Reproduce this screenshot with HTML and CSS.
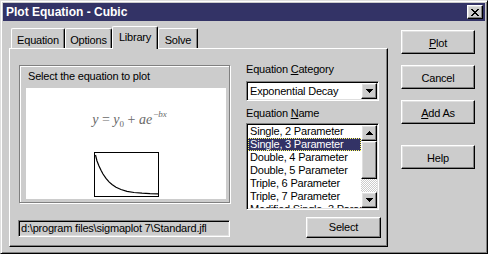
FILE: index.html
```html
<!DOCTYPE html>
<html>
<head>
<meta charset="utf-8">
<link rel="stylesheet" href="styles.css">
</head>
<body>
<div class="window">
  <div class="titlebar">
    <span class="title">Plot Equation - Cubic</span>
    <div class="close raised">
      <svg width="8" height="7" viewBox="0 0 8 7"><path d="M0 0h2v1H0zM6 0h2v1H6zM1 1h2v1H1zM5 1h2v1H5zM2 2h4v1H2zM3 3h2v1H3zM2 4h4v1H2zM1 5h2v1H1zM5 5h2v1H5zM0 6h2v1H0zM6 6h2v1H6z" fill="#000"/></svg>
    </div>
  </div>
  <div class="main">
    <div class="tabs-area">
      <div class="tabstrip">
        <div class="tab t-eq">Equation</div>
        <div class="tab t-opt">Options</div>
        <div class="tab t-lib active">Library</div>
        <div class="tab t-solve">Solve</div>
      </div>
      <div class="panel">
        <div class="left-col">
          <div class="frame">
            <div class="frame-label">Select the equation to plot</div>
            <div class="preview">
              <div class="formula"><i>y</i> = <i>y</i><span class="sub">0</span> + <i>ae</i><span class="sup">−<i>bx</i></span></div>
              <svg class="graph" width="65" height="45" viewBox="0 0 65 45">
                <rect x="0.5" y="0.5" width="64" height="44" fill="#fff" stroke="#000"/>
                <path d="M1.5 3 L3 9 L5 14 L7 18.3 L9 22 L12 26.4 L15 29.9 L18 32.5 L22 35.2 L27 37.5 L33 39.3 L40 40.5 L48 41.2 L56 41.6 L64 41.8" fill="none" stroke="#000" stroke-width="1.2"/>
              </svg>
            </div>
          </div>
          <div class="path-edit sunken">d:\program files\sigmaplot 7\Standard.jfl</div>
        </div>
        <div class="right-col">
          <div class="label cat">Equation <u>C</u>ategory</div>
          <div class="combo sunken">
            <span class="combo-text">Exponential Decay</span>
            <div class="drop-btn raised">
              <svg width="7" height="4" viewBox="0 0 7 4"><path d="M0 0h7v1H0zM1 1h5v1H1zM2 2h3v1H2zM3 3h1v1H3z" fill="#000"/></svg>
            </div>
          </div>
          <div class="label name">Equation <u>N</u>ame</div>
          <div class="listbox sunken">
            <div class="items">
              <div class="item">Single, 2 Parameter</div>
              <div class="item sel">Single, 3 Parameter</div>
              <div class="item">Double, 4 Parameter</div>
              <div class="item">Double, 5 Parameter</div>
              <div class="item">Triple, 6 Parameter</div>
              <div class="item">Triple, 7 Parameter</div>
              <div class="item">Modified Single, 3 Parameter</div>
            </div>
            <div class="scrollbar">
              <div class="sb-btn raised">
                <svg width="7" height="4" viewBox="0 0 7 4"><path d="M3 0h1v1H3zM2 1h3v1H2zM1 2h5v1H1zM0 3h7v1H0z" fill="#000"/></svg>
              </div>
              <div class="sb-thumb raised"></div>
              <div class="sb-track"></div>
              <div class="sb-btn raised">
                <svg width="7" height="4" viewBox="0 0 7 4"><path d="M0 0h7v1H0zM1 1h5v1H1zM2 2h3v1H2zM3 3h1v1H3z" fill="#000"/></svg>
              </div>
            </div>
          </div>
          <div class="btn select-btn raised">Select</div>
        </div>
      </div>
    </div>
    <div class="buttons">
      <div class="btn wbtn raised"><u>P</u>lot</div>
      <div class="btn wbtn raised">Cancel</div>
      <div class="btn wbtn raised"><u>A</u>dd As</div>
      <div class="btn wbtn help raised">Help</div>
    </div>
  </div>
</div>
</body>
</html>
```

FILE: styles.css
```css
html, body {
  margin: 0;
  padding: 0;
  background: #cccccc;
}

body {
  font-family: "Liberation Sans", Arial, sans-serif;
  font-size: 11px;
  letter-spacing: -0.2px;
  color: #000;
}

.window {
  width: 488px;
  height: 254px;
  box-sizing: border-box;
  border: 1px solid;
  border-color: #dfdfdf #000 #000 #dfdfdf;
  box-shadow: inset 1px 1px #fff, inset -1px -1px #808080;
  padding: 2px;
  background: #cccccc;
  display: flex;
  flex-direction: column;
}

.raised {
  background: #cccccc;
  box-sizing: border-box;
  border: 1px solid;
  border-color: #fff #000 #000 #fff;
  box-shadow: inset -1px -1px #808080, inset 1px 1px #dfdfdf;
}

.sunken {
  box-sizing: border-box;
  border: 1px solid;
  border-color: #808080 #fff #fff #808080;
  box-shadow: inset 1px 1px #000, inset -1px -1px #dfdfdf;
}

.titlebar {
  height: 18px;
  flex: none;
  background: #333366;
  color: #fff;
  display: flex;
  align-items: center;
  justify-content: space-between;
  padding: 0 2px 0 3px;
}

.title {
  font-weight: bold;
  font-size: 12px;
  letter-spacing: 0;
  line-height: 18px;
  white-space: nowrap;
}

.close {
  width: 16px;
  height: 14px;
  display: flex;
  align-items: center;
  justify-content: center;
}

.close svg {
  display: block;
}

.main {
  display: flex;
  flex: 1;
}

.tabs-area {
  margin: 5px 0 0 6px;
  display: flex;
  flex-direction: column;
}

.tabstrip {
  height: 22px;
  display: flex;
  align-items: flex-end;
  padding-left: 2px;
}

.tab {
  height: 20px;
  box-sizing: border-box;
  border-top: 1px solid #fff;
  border-left: 1px solid #fff;
  border-right: 1px solid #000;
  box-shadow: inset -1px 0 #808080;
  border-radius: 2px 2px 0 0;
  padding-top: 5px;
  line-height: 13px;
  text-align: center;
  white-space: nowrap;
}

.t-eq { width: 54px; }
.t-opt { width: 47px; }
.t-lib { width: 46px; }
.t-solve { width: 40px; }

.tab.active {
  height: 23px;
  margin-bottom: -1px;
  position: relative;
  z-index: 1;
  background: #cccccc;
  padding-top: 4px;
}

.panel {
  width: 379px;
  height: 199px;
  box-sizing: border-box;
  border: 1px solid;
  border-color: #fff #000 #000 #fff;
  box-shadow: inset -1px -1px #808080;
  display: flex;
}

.left-col {
  margin-left: 9px;
  padding-top: 16px;
  display: flex;
  flex-direction: column;
}

.frame {
  width: 211px;
  height: 138px;
  box-sizing: border-box;
  border: 1px solid #808080;
  box-shadow: inset 1px 1px #fff, 1px 1px #fff;
  padding: 0 3px 0 6px;
}

.frame-label {
  height: 22px;
  box-sizing: border-box;
  padding: 4px 0 0 2px;
  line-height: 13px;
  white-space: nowrap;
}

.preview {
  width: 200px;
  height: 111px;
  background: #fff;
  display: flex;
  flex-direction: column;
  align-items: center;
}

.formula {
  margin-top: 24px;
  height: 16px;
  line-height: 16px;
  padding-left: 7px;
  font-family: "Liberation Serif", "Times New Roman", serif;
  font-size: 14px;
  letter-spacing: 0;
  color: #6a6a6a;
  white-space: nowrap;
}

.sub {
  font-size: 9px;
  vertical-align: -3px;
  line-height: 0;
}

.sup {
  font-size: 9px;
  vertical-align: 7px;
  line-height: 0;
  margin-left: 1px;
}

.graph {
  display: block;
  margin-top: 24px;
}

.path-edit {
  margin: 17px 0 0 -1px;
  width: 212px;
  height: 17px;
  padding: 0 0 0 2px;
  line-height: 14px;
  white-space: nowrap;
  overflow: hidden;
  background: #cccccc;
}

.right-col {
  margin-left: 16px;
  width: 133px;
  display: flex;
  flex-direction: column;
}

.label {
  line-height: 13px;
  white-space: nowrap;
}

.label.cat { margin-top: 14px; }
.label.name { margin-top: 6px; }

.combo {
  margin-top: 5px;
  height: 20px;
  background: #fff;
  display: flex;
  padding: 1px;
}

.combo-text {
  flex: 1;
  line-height: 16px;
  padding-left: 2px;
  white-space: nowrap;
}

.drop-btn {
  width: 16px;
  height: 16px;
  display: flex;
  align-items: center;
  justify-content: center;
}

.drop-btn svg, .sb-btn svg {
  display: block;
}

.listbox {
  margin-top: 3px;
  height: 87px;
  background: #fff;
  display: flex;
  padding: 1px;
}

.items {
  flex: 1;
  overflow: hidden;
}

.item {
  height: 13px;
  line-height: 13px;
  padding-left: 2px;
  white-space: nowrap;
  box-sizing: border-box;
}

.item.sel {
  background: #333366;
  color: #fff;
  outline: 1px dotted #ffff66;
  outline-offset: -1px;
}

.scrollbar {
  width: 16px;
  display: flex;
  flex-direction: column;
}

.sb-btn {
  height: 16px;
  display: flex;
  align-items: center;
  justify-content: center;
}

.sb-thumb {
  height: 38px;
}

.sb-track {
  flex: 1;
  background-color: #fff;
  background-image: repeating-conic-gradient(#cccccc 0 25%, #fff 0 50%);
  background-size: 2px 2px;
}

.btn {
  text-align: center;
  line-height: 13px;
  white-space: nowrap;
}

.select-btn {
  margin-top: 7px;
  align-self: flex-end;
  margin-right: -2px;
  width: 75px;
  height: 21px;
  padding-top: 3px;
}

.buttons {
  margin-left: 13px;
  padding-top: 9px;
  display: flex;
  flex-direction: column;
}

.wbtn {
  width: 74px;
  height: 24px;
  padding-top: 6px;
}

.wbtn + .wbtn { margin-top: 11px; }
.wbtn.help { margin-top: 21px; }
```
